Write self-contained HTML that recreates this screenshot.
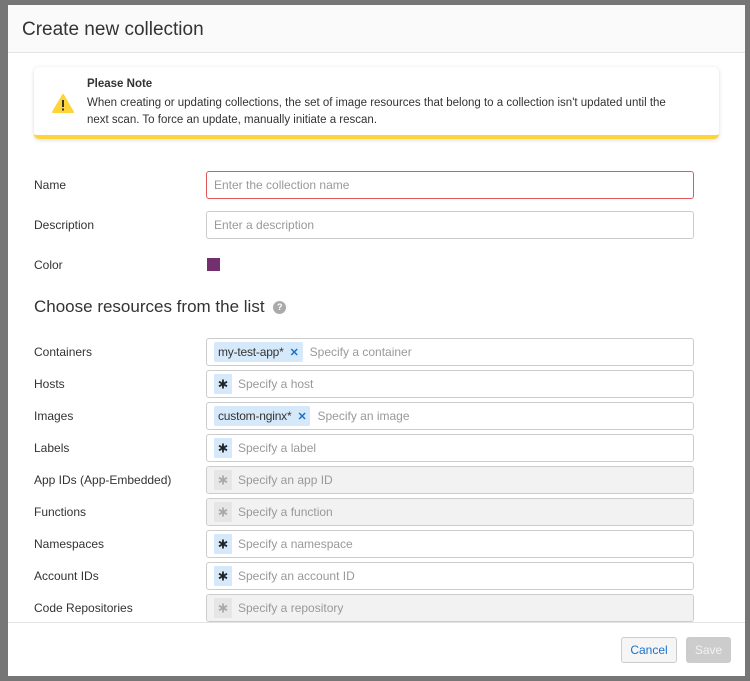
<!DOCTYPE html>
<html><head><style>
*{box-sizing:border-box;margin:0;padding:0}
body{width:750px;height:681px;background:#767676;font-family:"Liberation Sans",sans-serif;position:relative;overflow:hidden;color:#333}
.modal{position:absolute;left:8px;top:5px;width:737px;height:671px;background:#fff;overflow:hidden}
.hdr{height:48px;background:#fafafa;border-bottom:1px solid #e3e3e3;padding:14px 0 0 14px;font-size:19px;color:#333}
.note{position:absolute;left:26px;top:62px;width:685px;height:72px;background:#fff;border-radius:5px;box-shadow:0 1px 4px rgba(0,0,0,.15);border-bottom:4px solid #ffd43b}
.note b{position:absolute;left:53px;top:11px;font-size:11.5px}
.note p{position:absolute;left:53px;top:28px;font-size:11.5px;line-height:17px;width:600px}
.lbl{position:absolute;left:26px;font-size:12px;color:#333}
.inp{position:absolute;left:198px;width:488px;height:28px;border:1px solid #ccc;border-radius:3px;font-size:12px;color:#999;padding:0 0 0 7px;display:flex;align-items:center;background:#fff}
.dis{background:#f2f2f2}
.tag{background:#d6e9fb;color:#333;height:20px;padding:0 4px;display:flex;align-items:center;margin-right:7px;border-radius:2px;letter-spacing:-0.2px}
.tag i{font-style:normal;color:#1a73c9;font-weight:bold;margin-left:6px;font-size:11px}
.star{width:18px;height:20px;background:#d6e9fb;display:flex;align-items:center;justify-content:center;margin-right:6px}
.star svg{stroke:#222}
.dis .star{background:#e6e6e6}
.dis .star svg{stroke:#aaa}
.ftr{position:absolute;left:0;top:617px;width:737px;height:54px;border-top:1px solid #e3e3e3}
.btn{position:absolute;top:14px;height:26px;border-radius:3px;font-size:12px;display:flex;align-items:center;justify-content:center}
</style></head><body>
<div class="modal">
<div class="hdr">Create new collection</div>
<div class="note">
<svg style="position:absolute;left:18px;top:27px" width="22" height="19" viewBox="0 0 22 19"><path d="M11 1 L21 18 L1 18 Z" fill="#ffd43b" stroke="#ffd43b" stroke-linejoin="round" stroke-width="2"/><rect x="10" y="6" width="2" height="7" fill="#333"/><rect x="10" y="14.5" width="2" height="2" fill="#333"/></svg>
<b>Please Note</b>
<p>When creating or updating collections, the set of image resources that belong to a collection isn't updated until the next scan. To force an update, manually initiate a rescan.</p>
</div>
<div class="lbl" style="top:173px">Name</div>
<div class="inp" style="top:166px;border-color:#e0585a">Enter the collection name</div>
<div class="lbl" style="top:213px">Description</div>
<div class="inp" style="top:206px">Enter a description</div>
<div class="lbl" style="top:253px">Color</div>
<div style="position:absolute;left:199px;top:253px;width:13px;height:13px;background:#74306e"></div>
<div style="position:absolute;left:26px;top:292px;font-size:17px;color:#333">Choose resources from the list <span style="display:inline-block;width:13px;height:13px;border-radius:50%;background:#aaa;color:#fff;font-size:9px;text-align:center;line-height:13px;vertical-align:2px;margin-left:4px;font-weight:bold">?</span></div>

<div class="lbl" style="top:340px">Containers</div>
<div class="inp" style="top:333px"><span class="tag">my-test-app*<i>✕</i></span>Specify a container</div>
<div class="lbl" style="top:372px">Hosts</div>
<div class="inp" style="top:365px"><span class="star"><svg width="10" height="10" viewBox="0 0 10 10" stroke-width="1.8"><path d="M5 0.5V9.5M1 2.7L9 7.3M1 7.3L9 2.7"/></svg></span>Specify a host</div>
<div class="lbl" style="top:404px">Images</div>
<div class="inp" style="top:397px"><span class="tag">custom-nginx*<i>✕</i></span>Specify an image</div>
<div class="lbl" style="top:436px">Labels</div>
<div class="inp" style="top:429px"><span class="star"><svg width="10" height="10" viewBox="0 0 10 10" stroke-width="1.8"><path d="M5 0.5V9.5M1 2.7L9 7.3M1 7.3L9 2.7"/></svg></span>Specify a label</div>
<div class="lbl" style="top:468px">App IDs (App-Embedded)</div>
<div class="inp dis" style="top:461px"><span class="star"><svg width="10" height="10" viewBox="0 0 10 10" stroke-width="1.8"><path d="M5 0.5V9.5M1 2.7L9 7.3M1 7.3L9 2.7"/></svg></span>Specify an app ID</div>
<div class="lbl" style="top:500px">Functions</div>
<div class="inp dis" style="top:493px"><span class="star"><svg width="10" height="10" viewBox="0 0 10 10" stroke-width="1.8"><path d="M5 0.5V9.5M1 2.7L9 7.3M1 7.3L9 2.7"/></svg></span>Specify a function</div>
<div class="lbl" style="top:532px">Namespaces</div>
<div class="inp" style="top:525px"><span class="star"><svg width="10" height="10" viewBox="0 0 10 10" stroke-width="1.8"><path d="M5 0.5V9.5M1 2.7L9 7.3M1 7.3L9 2.7"/></svg></span>Specify a namespace</div>
<div class="lbl" style="top:564px">Account IDs</div>
<div class="inp" style="top:557px"><span class="star"><svg width="10" height="10" viewBox="0 0 10 10" stroke-width="1.8"><path d="M5 0.5V9.5M1 2.7L9 7.3M1 7.3L9 2.7"/></svg></span>Specify an account ID</div>
<div class="lbl" style="top:596px">Code Repositories</div>
<div class="inp dis" style="top:589px"><span class="star"><svg width="10" height="10" viewBox="0 0 10 10" stroke-width="1.8"><path d="M5 0.5V9.5M1 2.7L9 7.3M1 7.3L9 2.7"/></svg></span>Specify a repository</div>

<div class="ftr">
<div class="btn" style="left:613px;width:56px;border:1px solid #ccc;background:#f5f5f5;color:#1a73c9">Cancel</div>
<div class="btn" style="left:678px;width:45px;background:#ccc;color:#f2f2f2">Save</div>
</div>
</div>
</body></html>
